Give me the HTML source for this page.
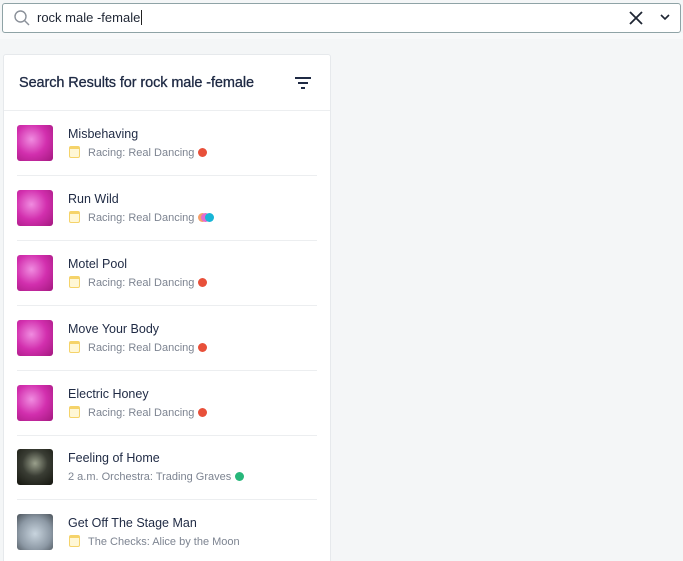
<!DOCTYPE html>
<html><head><style>
*{margin:0;padding:0;box-sizing:border-box}
html,body{width:683px;height:561px;overflow:hidden}
body{background:#f4f6f7;font-family:"Liberation Sans",sans-serif;position:relative}
.search{position:absolute;left:2px;top:3px;width:679px;height:30px;background:#fff;border:1.5px solid #8fa3a6;border-radius:3px}
.search .q{position:absolute;left:34px;top:6px;font-size:13px;color:#1e2533}
.top{position:absolute;left:0;top:33px;width:683px;height:6px;background:#f8f9fa}
.card{position:absolute;left:3px;top:54px;width:328px;height:530px;background:#fff;border:1px solid #e6e9ec;border-radius:3px}
.hdr{position:absolute;left:15px;top:20px;font-size:14.5px;color:#1f2a44;letter-spacing:-0.1px;-webkit-text-stroke:0.3px #1f2a44}
.hline{position:absolute;left:0;top:55px;width:326px;height:1px;background:#eceef0}
.row{position:absolute;left:14px;width:300px;height:65px}
.thumb{position:absolute;left:0;top:0;width:36px;height:36px;border-radius:3px;background:radial-gradient(circle at 40% 40%,#f08ce0,#d22fae 50%,#a4187f)}
.t{position:absolute;left:51px;top:2px;font-size:12.5px;color:#1f2a44}
.s{position:absolute;left:71px;top:22px;font-size:11px;color:#7d8491}
.s.n{left:51px}
.cal{position:absolute;left:52px;top:21px;width:11px;height:12px;border:1.5px solid #f5d36a;border-top-width:3px;border-radius:2px;background:#fff7d6}
.dot{display:inline-block;width:9px;height:9px;border-radius:50%;background:#e8503a;vertical-align:-1px;margin-left:4px}
.div{position:absolute;left:0;top:50px;width:300px;height:1px;background:#eceef0}
</style></head><body>
<div class="search">
<svg style="position:absolute;left:10px;top:5px" width="18" height="18" viewBox="0 0 18 18"><circle cx="7.5" cy="7.5" r="5.5" fill="none" stroke="#8a9099" stroke-width="1.4"/><line x1="11.5" y1="11.5" x2="16" y2="16" stroke="#8a9099" stroke-width="1.4"/></svg>
<span class="q">rock male -female<span style="border-left:1px solid #222;margin-left:1px"></span></span>
<svg style="position:absolute;left:626px;top:7px" width="14" height="14" viewBox="0 0 14 14"><path d="M1 1L13 13M13 1L1 13" stroke="#1e2533" stroke-width="1.8"/></svg>
<svg style="position:absolute;left:657px;top:9px" width="10" height="8" viewBox="0 0 10 8"><path d="M1 2L5 6L9 2" fill="none" stroke="#1e2533" stroke-width="1.6"/></svg>
</div>
<div class="top"></div>
<div class="card">
<div class="hdr">Search Results for rock male -female</div>
<svg style="position:absolute;left:290px;top:21px" width="18" height="14" viewBox="0 0 18 14"><path d="M1 2H17M4 7H14M7 12H11" stroke="#1f2a44" stroke-width="2"/></svg>
<div class="hline"></div>
</div>
<div class="row" style="left:17px;top:125px"><div class="thumb"></div><div class="t">Misbehaving</div><div class="cal"></div><div class="s">Racing: Real Dancing<span class="dot"></span></div><div class="div"></div></div>
<div class="row" style="left:17px;top:190px"><div class="thumb"></div><div class="t">Run Wild</div><div class="cal"></div><div class="s">Racing: Real Dancing<span class="dot" style="background:#f5a06a"></span><span class="dot" style="background:#e26bd0;margin-left:-6px"></span><span class="dot" style="background:#18b5d6;margin-left:-5px"></span></div><div class="div"></div></div>
<div class="row" style="left:17px;top:255px"><div class="thumb"></div><div class="t">Motel Pool</div><div class="cal"></div><div class="s">Racing: Real Dancing<span class="dot"></span></div><div class="div"></div></div>
<div class="row" style="left:17px;top:320px"><div class="thumb"></div><div class="t">Move Your Body</div><div class="cal"></div><div class="s">Racing: Real Dancing<span class="dot"></span></div><div class="div"></div></div>
<div class="row" style="left:17px;top:385px"><div class="thumb"></div><div class="t">Electric Honey</div><div class="cal"></div><div class="s">Racing: Real Dancing<span class="dot"></span></div><div class="div"></div></div>
<div class="row" style="left:17px;top:449px"><div class="thumb" style="background:radial-gradient(circle at 50% 40%,#9aa08c,#3a3d34 45%,#15160f)"></div><div class="t">Feeling of Home</div><div class="s n">2 a.m. Orchestra: Trading Graves<span class="dot" style="background:#27b77a"></span></div><div class="div"></div></div>
<div class="row" style="left:17px;top:514px"><div class="thumb" style="background:radial-gradient(circle at 50% 55%,#c8d4de,#8c98a4 60%,#4a525a)"></div><div class="t">Get Off The Stage Man</div><div class="cal"></div><div class="s">The Checks: Alice by the Moon</div></div>
</body></html>
